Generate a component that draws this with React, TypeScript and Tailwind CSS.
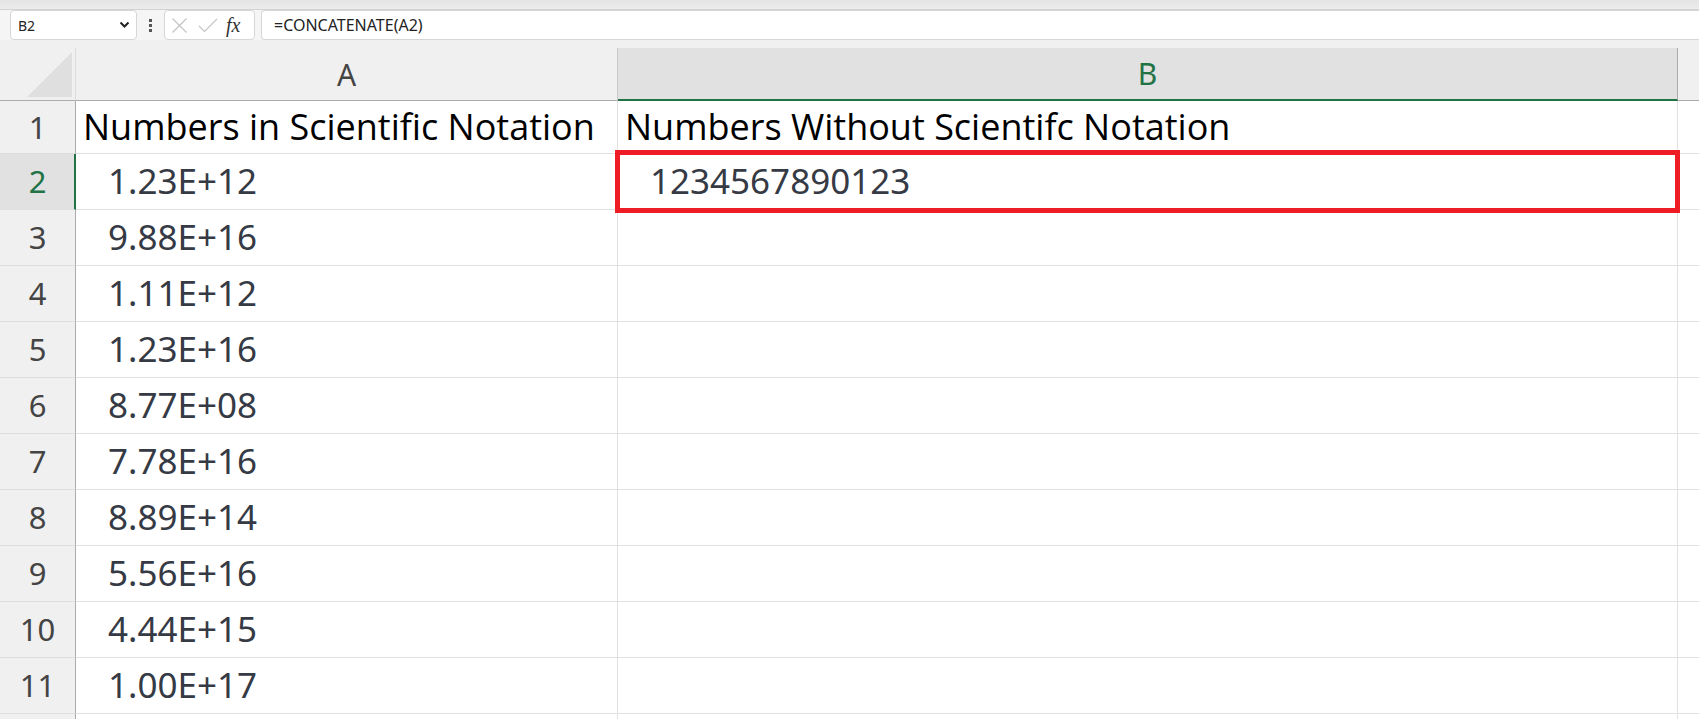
import React from "react";

const rows: { a: string; b?: string }[] = [
  { a: "1.23E+12", b: "1234567890123" },
  { a: "9.88E+16" },
  { a: "1.11E+12" },
  { a: "1.23E+16" },
  { a: "8.77E+08" },
  { a: "7.78E+16" },
  { a: "8.89E+14" },
  { a: "5.56E+16" },
  { a: "4.44E+15" },
  { a: "1.00E+17" },
];

const FormulaBar: React.FC = () => (
  <div className="flex h-[30px] items-stretch bg-[#f5f5f5]">
    <div className="ml-[10px] flex w-[127px] items-center justify-between rounded-[4px] border border-[#d6d6d6] bg-white pl-[7px] pr-[6px]">
      <span className="text-[14px] text-[#222]">B2</span>
      <svg width="11" height="8" viewBox="0 0 11 8">
        <path d="M1.5 1.5 L5.5 5.5 L9.5 1.5" fill="none" stroke="#222" strokeWidth="2" />
      </svg>
    </div>
    <div className="flex w-[27px] flex-col items-center justify-center gap-[2px]">
      <span className="h-[3px] w-[3px] bg-[#555]" />
      <span className="h-[3px] w-[3px] bg-[#555]" />
      <span className="h-[3px] w-[3px] bg-[#555]" />
    </div>
    <div className="flex w-[91px] items-center rounded-[4px] border border-[#d6d6d6] bg-white pl-[6px]">
      <svg width="17" height="17" viewBox="0 0 17 17" className="mr-[10px]">
        <path d="M1.5 1.5 L15.5 15.5 M15.5 1.5 L1.5 15.5" fill="none" stroke="#c4c4c4" strokeWidth="1.2" />
      </svg>
      <svg width="20" height="15" viewBox="0 0 20 15" className="mr-[8px]">
        <path d="M1 8 L6.5 13.5 L19 1" fill="none" stroke="#c4c4c4" strokeWidth="1.2" />
      </svg>
      <span className="font-['Liberation_Serif',serif] text-[20px] italic leading-none text-[#333]">
        fx
      </span>
    </div>
    <div className="ml-[6px] flex flex-1 items-center rounded-l-[4px] border border-r-0 border-[#d6d6d6] bg-white pl-[12px]">
      <span className="text-[16px] text-[#222]">=CONCATENATE(A2)</span>
    </div>
  </div>
);

const HeaderRow: React.FC = () => (
  <div className="grid h-[61px] grid-cols-[76px_542px_1060px_1fr] bg-[#f0f0f0] pt-[8px]">
    <div className="flex items-end justify-end border-b border-r border-[#ababab] border-r-[#dcdcdc] pb-[3px] pr-[3px]">
      <svg width="45" height="45" viewBox="0 0 45 45">
        <path d="M45 0 L45 45 L0 45 Z" fill="#dfdfdf" />
      </svg>
    </div>
    <div className="flex items-center justify-center border-b border-r border-[#ababab] border-r-[#c8c8c8] text-[30px] text-[#444]">
      A
    </div>
    <div className="flex items-center justify-center border-b-2 border-r border-b-[#217346] border-r-[#ababab] bg-[#e1e1e1] text-[30px] text-[#217346]">
      B
    </div>
    <div className="border-b border-[#ababab]" />
  </div>
);

export default function App() {
  return (
    <div className="relative h-[719px] w-[1699px] overflow-hidden bg-white font-['Noto_Sans',sans-serif]">
      <div className="h-[10px] border-b border-[#d2d2d2] bg-gradient-to-b from-[#e4e4e4] to-[#ececec]" />
      <FormulaBar />
      <HeaderRow />

      <div className="grid grid-cols-[76px_542px_1060px_1fr]">
        {/* row 1 */}
        <div className="flex h-[53px] items-center justify-center border-b border-r border-b-[#dedede] border-r-[#ababab] bg-[#f0f0f0] text-[31px] text-[#444]">
          1
        </div>
        <div className="flex h-[53px] items-end whitespace-nowrap border-b border-r border-[#e1e1e1] pb-[8px] pl-[7px] font-['Open_Sans',sans-serif] text-[36px] leading-none text-black">
          Numbers in Scientific Notation
        </div>
        <div className="flex h-[53px] items-end whitespace-nowrap border-b border-r border-[#e1e1e1] pb-[8px] pl-[7px] font-['Open_Sans',sans-serif] text-[36px] leading-none text-black">
          Numbers Without Scientifc Notation
        </div>
        <div className="h-[53px] border-b border-[#e1e1e1]" />

        {rows.map((r, i) => {
          const selected = i === 0;
          return (
            <React.Fragment key={i}>
              <div
                className={
                  selected
                    ? "flex h-[56px] items-center justify-center border-b border-r-2 border-b-[#dedede] border-r-[#217346] bg-[#e1e1e1] pl-[1px] text-[31px] text-[#217346]"
                    : "flex h-[56px] items-center justify-center border-b border-r border-b-[#dedede] border-r-[#ababab] bg-[#f0f0f0] text-[31px] text-[#444]"
                }
              >
                {i + 2}
              </div>
              <div className="flex h-[56px] items-center border-b border-r border-[#e1e1e1] pl-[32px] text-[35px] text-[#363a45]">
                {r.a}
              </div>
              <div className="flex h-[56px] items-center border-b border-r border-[#e1e1e1] pl-[32px] text-[35px] text-[#363a45]">
                {r.b ?? ""}
              </div>
              <div className="h-[56px] border-b border-[#e1e1e1]" />
            </React.Fragment>
          );
        })}

        <div className="h-[20px] border-r border-[#ababab] bg-[#f0f0f0]" />
        <div className="h-[20px] border-r border-[#e1e1e1]" />
        <div className="h-[20px] border-r border-[#e1e1e1]" />
        <div className="h-[20px]" />
      </div>

      {/* annotation box over B2 */}
      <div className="pointer-events-none absolute left-[615px] top-[150px] h-[63px] w-[1065px] border-[5px] border-[#ee1c25]" />
    </div>
  );
}
